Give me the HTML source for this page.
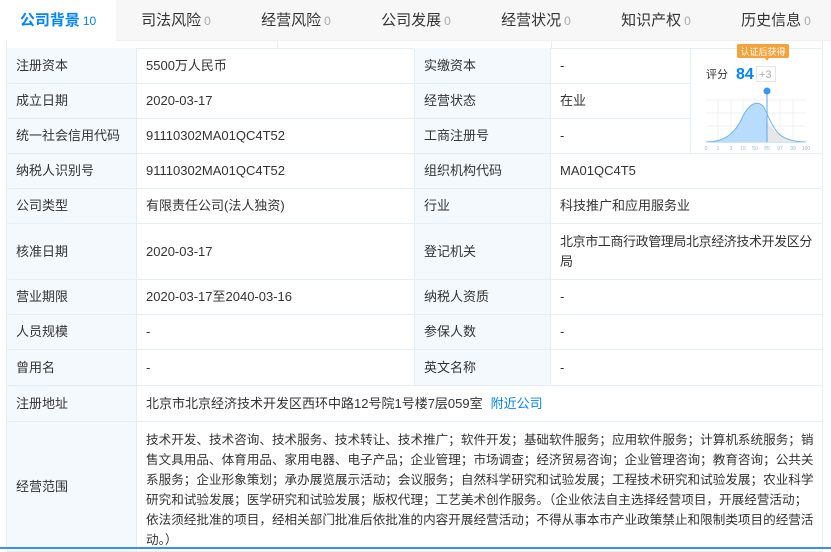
<!DOCTYPE html>
<html><head><meta charset="utf-8"><style>
*{margin:0;padding:0;box-sizing:border-box}
body{width:831px;height:549px;overflow:hidden;background:#fff;font-family:"Liberation Sans","Noto Sans CJK SC",sans-serif;color:#333;font-size:13px;position:relative}
.tabs{position:absolute;left:0;top:0;width:831px;height:41px;background:#f7f7f7;border-bottom:1px solid #eee}
.tab{position:absolute;top:0;width:120px;height:41px;line-height:41px;text-align:center;font-size:15px;color:#333}
.tab i{font-style:normal;font-size:12px;color:#aaa;margin-left:3px}
.tab.act{background:#fff;color:#0084ff;font-weight:bold;width:116px}
.tab.act i{color:#0084ff;font-weight:normal}
.c{position:absolute;border-right:1px solid #e4eef6;border-bottom:1px solid #e4eef6;display:flex;align-items:center;padding-left:9px;line-height:20px}
.l{background:#f3f9fd}
svg{overflow:visible}
</style></head><body>
<div class="tabs">
<div class="tab act" style="left:0">公司背景<i>10</i></div>
<div class="tab" style="left:116px">司法风险<i>0</i></div>
<div class="tab" style="left:236px">经营风险<i>0</i></div>
<div class="tab" style="left:356px">公司发展<i>0</i></div>
<div class="tab" style="left:476px">经营状况<i>0</i></div>
<div class="tab" style="left:596px">知识产权<i>0</i></div>
<div class="tab" style="left:716px">历史信息<i>0</i></div>
</div>
<div style="position:absolute;left:6px;top:41px;width:817px;height:8px;border-left:1px solid #e4eef6;border-right:1px solid #e4eef6;border-bottom:1px solid #e4eef6"></div>
<div style="position:absolute;left:277px;top:41px;width:1px;height:7px;background:#e4eef6"></div>
<div style="position:absolute;left:551px;top:41px;width:1px;height:7px;background:#e4eef6"></div>
<div style="position:absolute;left:6px;top:48px;width:1px;height:501px;background:#e4eef6"></div>

<div class="c l" style="left:7px;top:48px;width:130px;height:36px">注册资本</div>
<div class="c" style="left:137px;top:48px;width:278px;height:36px">5500万人民币</div>
<div class="c l" style="left:415px;top:48px;width:136px;height:36px">实缴资本</div>
<div class="c" style="left:551px;top:48px;width:140px;height:36px">-</div>

<div class="c l" style="left:7px;top:84px;width:130px;height:35px">成立日期</div>
<div class="c" style="left:137px;top:84px;width:278px;height:35px">2020-03-17</div>
<div class="c l" style="left:415px;top:84px;width:136px;height:35px">经营状态</div>
<div class="c" style="left:551px;top:84px;width:140px;height:35px">在业</div>

<div class="c l" style="left:7px;top:119px;width:130px;height:35px">统一社会信用代码</div>
<div class="c" style="left:137px;top:119px;width:278px;height:35px">91110302MA01QC4T52</div>
<div class="c l" style="left:415px;top:119px;width:136px;height:35px">工商注册号</div>
<div class="c" style="left:551px;top:119px;width:140px;height:35px">-</div>

<div class="c" style="left:691px;top:48px;width:132px;height:106px;padding:0;display:block;z-index:2">
<svg width="132" height="106" viewBox="0 0 132 106" style="position:absolute;left:0;top:0">
<rect x="46" y="-4" width="52" height="14" rx="2" fill="#f6a23a"/>
<polygon points="74,10 78,10 76,13" fill="#f6a23a"/>
<text x="72" y="7" font-size="9" fill="#fff" text-anchor="middle" font-family="Liberation Sans,Noto Sans CJK SC,sans-serif">认证后获得</text>
<text x="15" y="30" font-size="11" fill="#333" font-family="Liberation Sans,Noto Sans CJK SC,sans-serif">评分</text>
<text x="45" y="31" font-size="16" font-weight="bold" fill="#0084ff" font-family="Liberation Sans,sans-serif">84</text>
<rect x="65.5" y="18.5" width="19" height="15" fill="none" stroke="#ccc" stroke-dasharray="1,1"/>
<text x="68" y="30" font-size="11" fill="#aaa" font-family="Liberation Sans,sans-serif">+3</text>
<g stroke="#f0f0f0" stroke-width="1">
<line x1="15" y1="52" x2="115" y2="52"/><line x1="15" y1="65" x2="115" y2="65"/><line x1="15" y1="78" x2="115" y2="78"/>
<line x1="27" y1="50" x2="27" y2="94"/><line x1="40" y1="50" x2="40" y2="94"/><line x1="52" y1="50" x2="52" y2="94"/><line x1="64" y1="50" x2="64" y2="94"/><line x1="89" y1="50" x2="89" y2="94"/><line x1="102" y1="50" x2="102" y2="94"/>
</g>
<path d="M76 72 C84 86 92 92 115 94 L76 94 Z" fill="#e7e7e7"/>
<path d="M15 94 C35 94 45 84 52 68 C58 56 66 52 72 58 C74 62 75 66 76 72 L76 94 Z" fill="#b8dcfb"/>
<path d="M15 94 C35 94 45 84 52 68 C58 56 66 52 72 58 C76 64 80 78 88 86 C95 92 104 94 115 94" fill="none" stroke="#6fb4f5" stroke-width="1"/>
<line x1="15" y1="94.5" x2="115" y2="94.5" stroke="#cde4f8"/>
<line x1="76" y1="46" x2="76" y2="94" stroke="#5aa7f0"/>
<circle cx="76" cy="43" r="3.5" fill="#3a95f0"/>
<g font-size="5" fill="#9bb8d8" font-family="Liberation Sans,sans-serif" text-anchor="middle">
<text x="15" y="102">0</text><text x="27" y="102">1</text><text x="40" y="102">3</text><text x="52" y="102">15</text><text x="64" y="102">50</text><text x="76" y="102">85</text><text x="89" y="102">97</text><text x="102" y="102">99</text><text x="115" y="102">100</text>
</g>
</svg></div>

<div class="c l" style="left:7px;top:154px;width:130px;height:35px">纳税人识别号</div>
<div class="c" style="left:137px;top:154px;width:278px;height:35px">91110302MA01QC4T52</div>
<div class="c l" style="left:415px;top:154px;width:136px;height:35px">组织机构代码</div>
<div class="c" style="left:551px;top:154px;width:272px;height:35px">MA01QC4T5</div>

<div class="c l" style="left:7px;top:189px;width:130px;height:35px">公司类型</div>
<div class="c" style="left:137px;top:189px;width:278px;height:35px">有限责任公司(法人独资)</div>
<div class="c l" style="left:415px;top:189px;width:136px;height:35px">行业</div>
<div class="c" style="left:551px;top:189px;width:272px;height:35px">科技推广和应用服务业</div>

<div class="c l" style="left:7px;top:224px;width:130px;height:56px">核准日期</div>
<div class="c" style="left:137px;top:224px;width:278px;height:56px">2020-03-17</div>
<div class="c l" style="left:415px;top:224px;width:136px;height:56px">登记机关</div>
<div class="c" style="left:551px;top:224px;width:272px;height:56px;padding-right:0;letter-spacing:-0.4px">北京市工商行政管理局北京经济技术开发区分<br>局</div>

<div class="c l" style="left:7px;top:280px;width:130px;height:35px">营业期限</div>
<div class="c" style="left:137px;top:280px;width:278px;height:35px">2020-03-17至2040-03-16</div>
<div class="c l" style="left:415px;top:280px;width:136px;height:35px">纳税人资质</div>
<div class="c" style="left:551px;top:280px;width:272px;height:35px">-</div>

<div class="c l" style="left:7px;top:315px;width:130px;height:35px">人员规模</div>
<div class="c" style="left:137px;top:315px;width:278px;height:35px">-</div>
<div class="c l" style="left:415px;top:315px;width:136px;height:35px">参保人数</div>
<div class="c" style="left:551px;top:315px;width:272px;height:35px">-</div>

<div class="c l" style="left:7px;top:350px;width:130px;height:36px">曾用名</div>
<div class="c" style="left:137px;top:350px;width:278px;height:36px">-</div>
<div class="c l" style="left:415px;top:350px;width:136px;height:36px">英文名称</div>
<div class="c" style="left:551px;top:350px;width:272px;height:36px">-</div>

<div class="c l" style="left:7px;top:386px;width:130px;height:36px">注册地址</div>
<div class="c" style="left:137px;top:386px;width:686px;height:36px">北京市北京经济技术开发区西环中路12号院1号楼7层059室<span style="color:#0084ff;margin-left:8px">附近公司</span></div>

<div class="c l" style="left:7px;top:422px;width:130px;height:130px">经营范围</div>
<div class="c" style="left:137px;top:422px;width:686px;height:130px;align-items:flex-start;padding-top:8px;line-height:20px;white-space:nowrap;font-size:12.6px">技术开发、技术咨询、技术服务、技术转让、技术推广；软件开发；基础软件服务；应用软件服务；计算机系统服务；销<br>售文具用品、体育用品、家用电器、电子产品；企业管理；市场调查；经济贸易咨询；企业管理咨询；教育咨询；公共关<br>系服务；企业形象策划；承办展览展示活动；会议服务；自然科学研究和试验发展；工程技术研究和试验发展；农业科学<br>研究和试验发展；医学研究和试验发展；版权代理；工艺美术创作服务。（企业依法自主选择经营项目，开展经营活动；<br>依法须经批准的项目，经相关部门批准后依批准的内容开展经营活动；不得从事本市产业政策禁止和限制类项目的经营活<br>动。）</div>
<div style="position:absolute;left:0;top:547px;width:831px;height:2px;background:#3d8ef0"></div>
</body></html>
